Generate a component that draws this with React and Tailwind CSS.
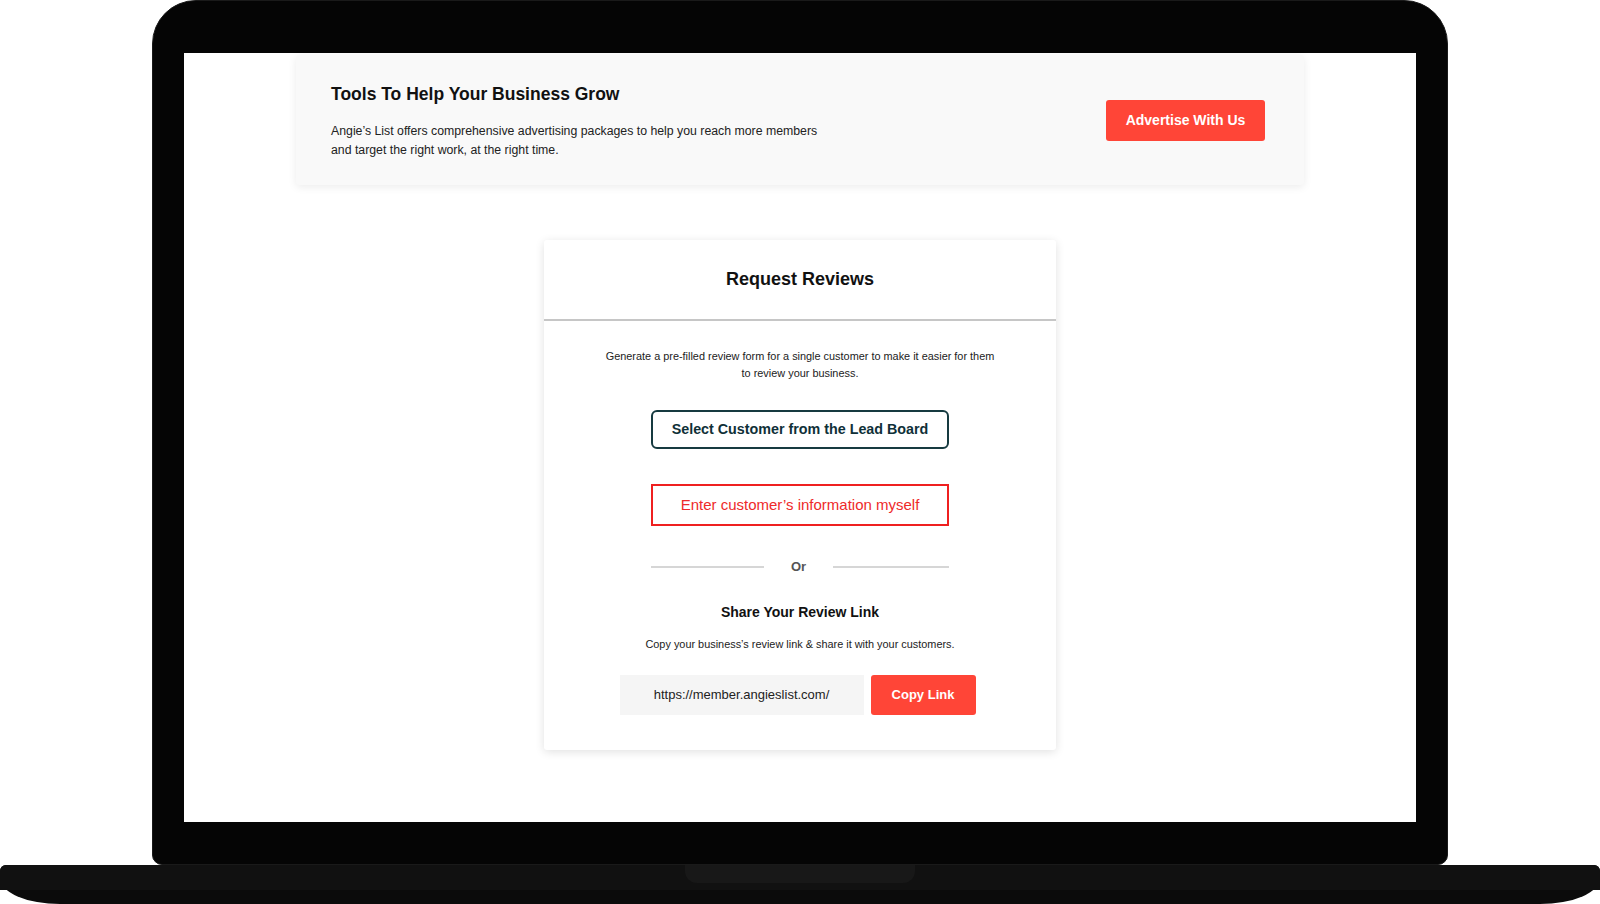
export default function App() {
  return (
    <div
      className="w-full h-[904px] bg-white flex flex-col overflow-hidden"
      style={{ fontFamily: '"Liberation Sans", Arial, sans-serif' }}
    >
      {/* laptop lid */}
      <div className="mx-auto w-[1296px] h-[865px] shrink-0 bg-[#050505] border border-[#1a1a1a] rounded-t-[44px] rounded-b-[10px] pt-[52px] px-[31px] pb-[42px]">
        <div className="h-full bg-white flex flex-col items-center">
          {/* promo card */}
          <div className="mt-[2px] w-[1008px] h-[130px] bg-[#f9f9f9] rounded-[3px] shadow-[0_2px_8px_rgba(0,0,0,0.08)] flex items-center justify-between pl-[35px] pr-[39px]">
            <div className="pt-[3px]">
              <h2 className="text-[17.5px] leading-[22px] font-bold text-[#111]">
                Tools To Help Your Business Grow
              </h2>
              <p className="mt-[17px] text-[12.3px] leading-[19.5px] text-[#222]">
                Angie’s List offers comprehensive advertising packages to help you reach more members
                <br />
                and target the right work, at the right time.
              </p>
            </div>
            <button className="w-[159px] h-[41px] bg-[#ff4537] rounded-[3px] text-white text-[14px] font-bold">
              Advertise With Us
            </button>
          </div>

          {/* request reviews card */}
          <div className="mt-[55px] w-[512px] bg-white rounded-[3px] shadow-[0_2px_10px_rgba(0,0,0,0.12)] flex flex-col items-center pb-[35px]">
            <div className="w-full h-[81px] border-b-2 border-[#c6c6c6] flex items-center justify-center">
              <h2 className="text-[18px] font-bold text-[#111]">Request Reviews</h2>
            </div>

            <p className="mt-[27px] text-[10.9px] leading-[17px] text-[#222] text-center">
              Generate a pre-filled review form for a single customer to make it easier for them
              <br />
              to review your business.
            </p>

            <button className="mt-[28px] w-[298px] h-[39px] border-2 border-[#163a40] rounded-[6px] text-[14.3px] font-bold text-[#0f3038]">
              Select Customer from the Lead Board
            </button>

            <button className="mt-[35px] w-[298px] h-[42px] border-2 border-[#ef2020] text-[15px] text-[#ee2a2a]">
              Enter customer’s information myself
            </button>

            <div className="mt-[32px] w-[298px] h-[18px] flex items-center">
              <div className="w-[113px] h-[2px] bg-[#d6d6d6]" />
              <span className="w-[69px] text-center text-[13px] font-bold text-[#555]">Or</span>
              <div className="flex-1 h-[2px] bg-[#d6d6d6]" />
            </div>

            <h3 className="mt-[26px] text-[14px] leading-[20px] font-bold text-[#111]">
              Share Your Review Link
            </h3>
            <p className="mt-[14px] text-[10.9px] leading-[17px] text-[#222]">
              Copy your business’s review link &amp; share it with your customers.
            </p>

            <div className="mt-[22px] mr-[5px] flex gap-[7px]">
              <div className="w-[244px] h-[40px] bg-[#f5f5f5] flex items-center justify-center text-[13px] text-[#222]">
                https://member.angieslist.com/
              </div>
              <button className="w-[105px] h-[40px] bg-[#ff4537] rounded-[3px] text-white text-[13px] font-bold">
                Copy Link
              </button>
            </div>
          </div>
        </div>
      </div>

      {/* laptop base */}
      <div className="w-full h-[39px] shrink-0 bg-[#0b0b0b] rounded-tl-[6px] rounded-tr-[6px] rounded-bl-[60px_26px] rounded-br-[60px_26px] flex flex-col">
        <div className="h-[25px] bg-[#111] rounded-tl-[6px] rounded-tr-[6px] flex justify-center">
          <div className="w-[230px] h-[18px] bg-[#181818] rounded-b-[12px]" />
        </div>
      </div>
    </div>
  );
}
